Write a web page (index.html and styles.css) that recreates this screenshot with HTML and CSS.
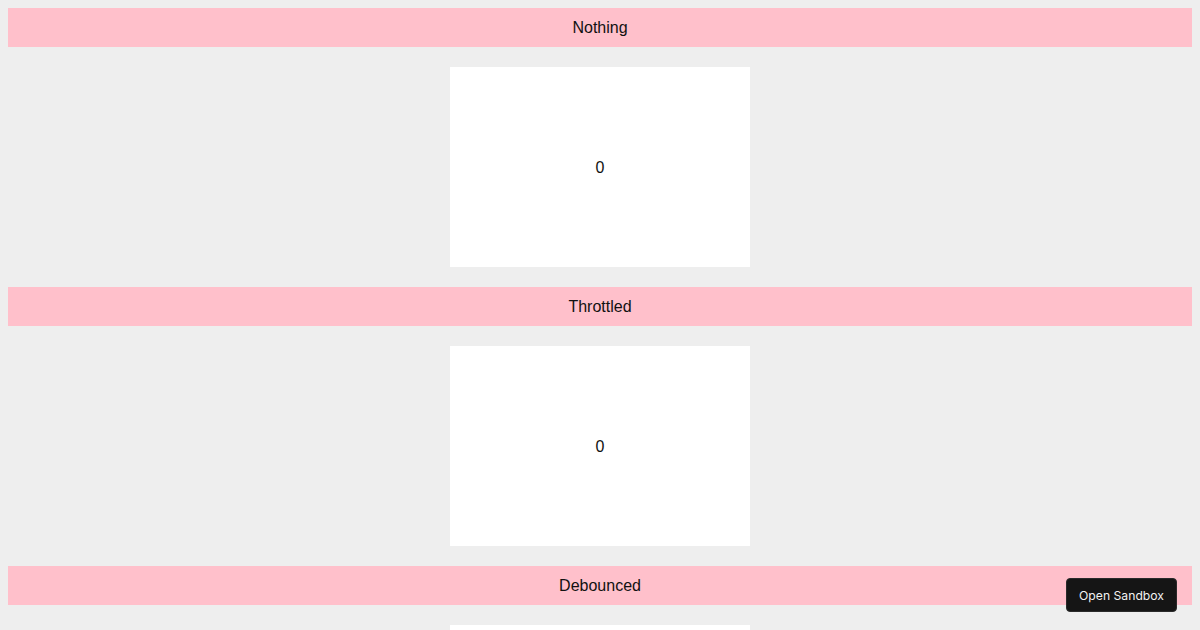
FILE: index.html
```html
<!DOCTYPE html>
<html>
<head>
<meta charset="utf-8">
<link rel="stylesheet" href="styles.css">
</head>
<body>
  <section class="demo">
    <div class="title">Nothing</div>
    <div class="box">0</div>
  </section>
  <section class="demo">
    <div class="title">Throttled</div>
    <div class="box">0</div>
  </section>
  <section class="demo">
    <div class="title">Debounced</div>
    <div class="box">0</div>
  </section>
  <a class="sandbox" href="#">Open Sandbox</a>
</body>
</html>
```

FILE: styles.css
```css
html, body {
  background: #eeeeee;
}
body {
  margin: 8px;
  font-family: "Liberation Sans", Arial, sans-serif;
  font-size: 16px;
  color: #111;
}
.demo {
  display: flex;
  flex-direction: column;
  align-items: center;
}
.title {
  align-self: stretch;
  background: #ffc0cb;
  padding: 10px 0;
  line-height: 19px;
  text-align: center;
}
.box {
  width: 300px;
  height: 200px;
  margin: 20px 0;
  background: #ffffff;
  display: flex;
  align-items: center;
  justify-content: center;
  line-height: 20px;
  padding-top: 1px;
  box-sizing: border-box;
}
.sandbox {
  position: fixed;
  right: 23px;
  bottom: 18px;
  width: 111px;
  height: 34px;
  box-sizing: border-box;
  display: flex;
  align-items: center;
  justify-content: center;
  background: #151515;
  border: 1px solid #2a2a2a;
  border-radius: 4px;
  color: #f2f2f2;
  font-family: Inter, "Liberation Sans", sans-serif;
  font-size: 12.2px;
  text-decoration: none;
}
```
